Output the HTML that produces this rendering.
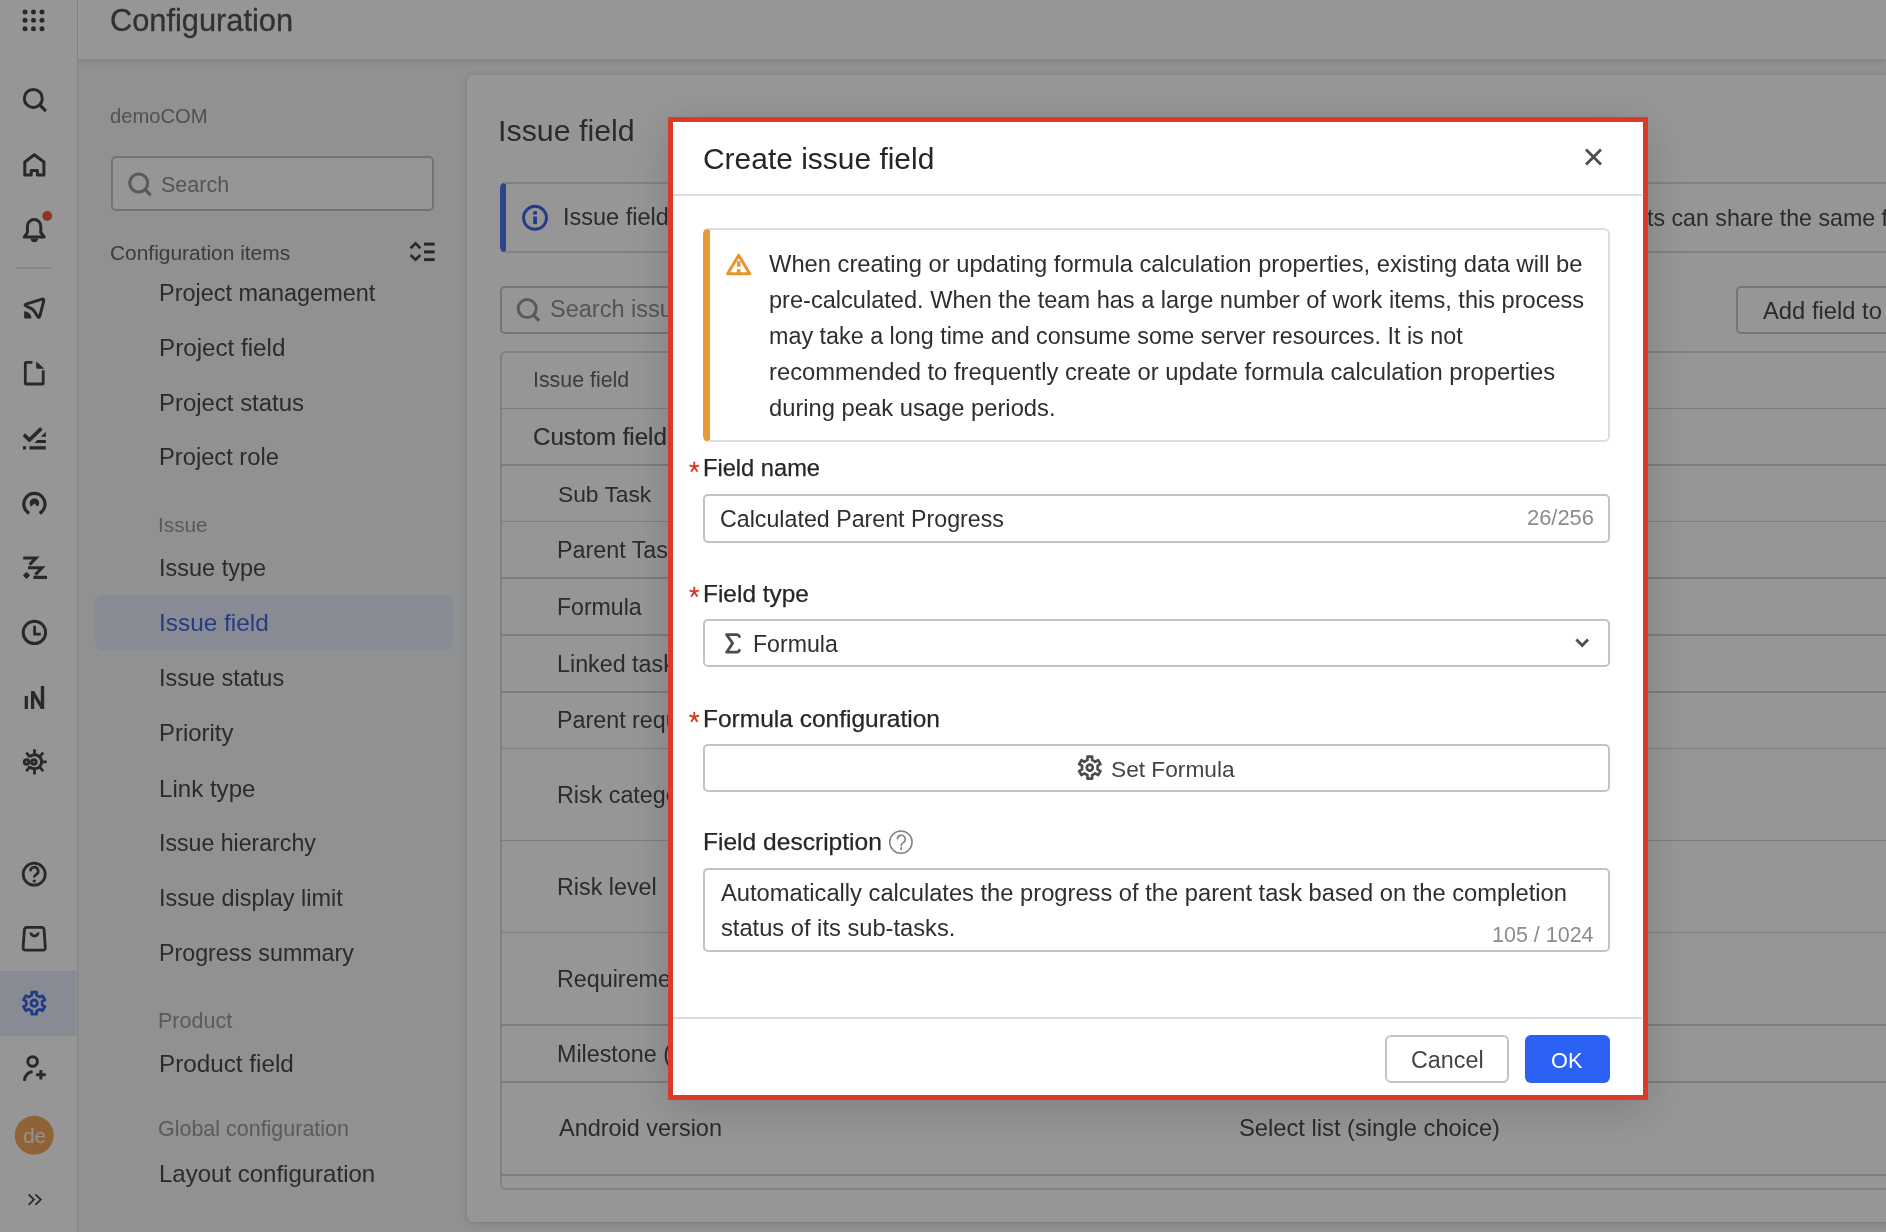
<!DOCTYPE html>
<html><head><meta charset="utf-8"><style>
html,body{margin:0;padding:0;width:1886px;height:1232px;overflow:hidden;background:#fff}
body{position:relative;font-family:"Liberation Sans", sans-serif}
.t{position:absolute;white-space:nowrap;line-height:1;will-change:transform}
svg{position:absolute;overflow:visible}
</style></head><body>
<div style="position:absolute;left:0px;top:0px;width:1886px;height:1232px;background:#f5f6f9"></div>
<div style="position:absolute;left:77px;top:0px;width:1809px;height:59px;background:#fff;box-shadow:0 2px 6px rgba(0,0,0,0.12)"></div>
<div class="t" style="left:110.16px;top:5.85px;font-size:30.78px;color:#545454;font-weight:normal;-webkit-text-stroke:0.3px #545454">Configuration</div>
<div style="position:absolute;left:0px;top:0px;width:78px;height:1232px;background:#fff;border-right:1.5px solid #dcdee3;box-sizing:border-box"></div>
<div class="t" style="left:110.37px;top:106.41px;font-size:20.19px;color:#8a8a8a;font-weight:normal;">demoCOM</div>
<div style="position:absolute;left:111px;top:156px;width:323px;height:55px;border:2px solid #c5c6ca;border-radius:5px;box-sizing:border-box;background:#fff"></div>
<div class="t" style="left:160.93px;top:175.00px;font-size:21.50px;color:#8f8f8f;font-weight:normal;">Search</div>
<div class="t" style="left:110.22px;top:242.69px;font-size:20.92px;color:#666;font-weight:normal;">Configuration items</div>
<div style="position:absolute;left:94.5px;top:595.3px;width:358px;height:55px;background:#e7ecfa;border-radius:8px"></div>
<div class="t" style="left:158.67px;top:282.16px;font-size:23.44px;color:#4a4a4a;font-weight:normal;">Project management</div>
<div class="t" style="left:158.61px;top:335.91px;font-size:24.20px;color:#4a4a4a;font-weight:normal;">Project field</div>
<div class="t" style="left:158.63px;top:390.92px;font-size:23.95px;color:#4a4a4a;font-weight:normal;">Project status</div>
<div class="t" style="left:158.65px;top:446.33px;font-size:23.71px;color:#4a4a4a;font-weight:normal;">Project role</div>
<div class="t" style="left:158.66px;top:557.21px;font-size:23.49px;color:#4a4a4a;font-weight:normal;">Issue type</div>
<div class="t" style="left:158.60px;top:611.28px;font-size:24.36px;color:#3d66e0;font-weight:normal;">Issue field</div>
<div class="t" style="left:158.67px;top:666.84px;font-size:23.46px;color:#4a4a4a;font-weight:normal;">Issue status</div>
<div class="t" style="left:158.63px;top:721.27px;font-size:23.90px;color:#4a4a4a;font-weight:normal;">Priority</div>
<div class="t" style="left:158.62px;top:777.10px;font-size:24.10px;color:#4a4a4a;font-weight:normal;">Link type</div>
<div class="t" style="left:158.69px;top:832.41px;font-size:23.14px;color:#4a4a4a;font-weight:normal;">Issue hierarchy</div>
<div class="t" style="left:158.67px;top:886.84px;font-size:23.46px;color:#4a4a4a;font-weight:normal;">Issue display limit</div>
<div class="t" style="left:158.69px;top:942.35px;font-size:23.22px;color:#4a4a4a;font-weight:normal;">Progress summary</div>
<div class="t" style="left:158.60px;top:1051.66px;font-size:24.26px;color:#4a4a4a;font-weight:normal;">Product field</div>
<div class="t" style="left:158.63px;top:1162.39px;font-size:24.00px;color:#4a4a4a;font-weight:normal;">Layout configuration</div>
<div class="t" style="left:158.28px;top:514.95px;font-size:20.74px;color:#9a9a9a;font-weight:normal;">Issue</div>
<div class="t" style="left:158.22px;top:1009.65px;font-size:21.56px;color:#9a9a9a;font-weight:normal;">Product</div>
<div class="t" style="left:158.22px;top:1119.32px;font-size:21.47px;color:#9a9a9a;font-weight:normal;">Global configuration</div>
<div style="position:absolute;left:467px;top:75px;width:1440px;height:1147px;background:#fff;border-radius:6px;box-shadow:0 1px 6px rgba(0,0,0,0.15)"></div>
<div class="t" style="left:497.93px;top:114.78px;font-size:30.38px;color:#4a4a4a;font-weight:normal;">Issue field</div>
<div style="position:absolute;left:499.8px;top:182px;width:1420px;height:71px;background:#fff;border:2px solid #dcdde1;border-left:6px solid #4a78f0;border-radius:6px;box-sizing:border-box"></div>
<div class="t" style="left:563.26px;top:206.11px;font-size:23.50px;color:#4a4a4a;font-weight:normal;">Issue field</div>
<div class="t" style="left:1646.78px;top:207.26px;font-size:23.20px;color:#4a4a4a;font-weight:normal;">ts can share the same fields</div>
<div style="position:absolute;left:500px;top:286px;width:480px;height:48px;border:2px solid #c5c6ca;border-radius:5px;box-sizing:border-box"></div>
<div class="t" style="left:549.77px;top:297.91px;font-size:23.50px;color:#8f8f8f;font-weight:normal;">Search issues</div>
<div style="position:absolute;left:1735.9px;top:286.3px;width:300px;height:47.3px;border:2px solid #c5c6ca;border-radius:5px;box-sizing:border-box"></div>
<div class="t" style="left:1762.60px;top:299.17px;font-size:23.78px;color:#4a4a4a;font-weight:normal;">Add field to project</div>
<div style="position:absolute;left:500px;top:351px;width:1420px;height:839px;border:2px solid #dcdde1;border-radius:6px;box-sizing:border-box"></div>
<div style="position:absolute;left:500px;top:407.8px;width:1420px;height:1.4px;background:#d3d4d8"></div>
<div style="position:absolute;left:500px;top:464.3px;width:1420px;height:1.4px;background:#d3d4d8"></div>
<div style="position:absolute;left:500px;top:520.8px;width:1420px;height:1.4px;background:#d3d4d8"></div>
<div style="position:absolute;left:500px;top:577.3px;width:1420px;height:1.4px;background:#d3d4d8"></div>
<div style="position:absolute;left:500px;top:634.3px;width:1420px;height:1.4px;background:#d3d4d8"></div>
<div style="position:absolute;left:500px;top:691.3px;width:1420px;height:1.4px;background:#d3d4d8"></div>
<div style="position:absolute;left:500px;top:747.8px;width:1420px;height:1.4px;background:#d3d4d8"></div>
<div style="position:absolute;left:500px;top:839.8px;width:1420px;height:1.4px;background:#d3d4d8"></div>
<div style="position:absolute;left:500px;top:931.8px;width:1420px;height:1.4px;background:#d3d4d8"></div>
<div style="position:absolute;left:500px;top:1024.3px;width:1420px;height:1.4px;background:#d3d4d8"></div>
<div style="position:absolute;left:500px;top:1081.3px;width:1420px;height:1.4px;background:#d3d4d8"></div>
<div style="position:absolute;left:500px;top:1174.3px;width:1420px;height:1.4px;background:#d3d4d8"></div>
<div class="t" style="left:532.73px;top:370.02px;font-size:21.36px;color:#666;font-weight:normal;">Issue field</div>
<div class="t" style="left:533.27px;top:425.41px;font-size:24.08px;color:#4a4a4a;font-weight:normal;-webkit-text-stroke:0.2px #4a4a4a">Custom field</div>
<div class="t" style="left:557.89px;top:483.03px;font-size:22.77px;color:#4a4a4a;font-weight:normal;">Sub Task</div>
<div class="t" style="left:556.78px;top:538.83px;font-size:23.30px;color:#4a4a4a;font-weight:normal;">Parent Task</div>
<div class="t" style="left:556.80px;top:595.76px;font-size:23.08px;color:#4a4a4a;font-weight:normal;">Formula</div>
<div class="t" style="left:556.78px;top:652.58px;font-size:23.30px;color:#4a4a4a;font-weight:normal;">Linked task</div>
<div class="t" style="left:556.78px;top:709.33px;font-size:23.30px;color:#4a4a4a;font-weight:normal;">Parent requirement</div>
<div class="t" style="left:556.78px;top:783.58px;font-size:23.30px;color:#4a4a4a;font-weight:normal;">Risk category</div>
<div class="t" style="left:556.78px;top:875.58px;font-size:23.30px;color:#4a4a4a;font-weight:normal;">Risk level</div>
<div class="t" style="left:556.78px;top:967.83px;font-size:23.30px;color:#4a4a4a;font-weight:normal;">Requirement</div>
<div class="t" style="left:556.78px;top:1042.58px;font-size:23.30px;color:#4a4a4a;font-weight:normal;">Milestone (custom)</div>
<div class="t" style="left:558.60px;top:1117.44px;font-size:23.46px;color:#4a4a4a;font-weight:normal;">Android version</div>
<div class="t" style="left:1239.16px;top:1116.91px;font-size:23.73px;color:#4a4a4a;font-weight:normal;">Select list (single choice)</div>
<svg width="1886" height="1232" style="left:0;top:0" viewBox="0 0 1886 1232"><circle cx="25" cy="11.9" r="2.5" fill="#474747"/><circle cx="25" cy="20.3" r="2.5" fill="#474747"/><circle cx="25" cy="28.8" r="2.5" fill="#474747"/><circle cx="33.5" cy="11.9" r="2.5" fill="#474747"/><circle cx="33.5" cy="20.3" r="2.5" fill="#474747"/><circle cx="33.5" cy="28.8" r="2.5" fill="#474747"/><circle cx="42" cy="11.9" r="2.5" fill="#474747"/><circle cx="42" cy="20.3" r="2.5" fill="#474747"/><circle cx="42" cy="28.8" r="2.5" fill="#474747"/><circle cx="33.3" cy="98.4" r="9" fill="none" stroke="#474747" stroke-width="3"/><path d="M39.8,104.9 L44.8,109.9" stroke="#474747" stroke-width="3.2" stroke-linecap="square"/><path d="M24.8,175.1 V162 L34.3,154.7 L43.9,162 V175.1 H37.4 V170.4 H31.2 V175.1 Z" fill="none" stroke="#474747" stroke-width="3" stroke-linejoin="round"/><path d="M24.2,237 L27.4,232.5 V226.2 A6.7,6.7 0 0 1 40.8,226.2 V232.5 L44.2,237 Z" fill="none" stroke="#474747" stroke-width="3" stroke-linejoin="round"/><path d="M30.6,238.5 A3.7,3.7 0 0 0 38,238.5 Z" fill="#474747"/><circle cx="47.2" cy="216" r="4.9" fill="#f25a45"/><rect x="15" y="267.5" width="37" height="1.2" fill="#d9d9d9"/><path d="M26.66,303.86 L41.34,299.34 Q44.40,298.40 43.60,301.50 L39.85,315.90 Q39.10,318.80 37.50,316.26 L34.69,311.80 Q33.30,309.60 30.97,308.45 L26.47,306.22 Q23.60,304.80 26.66,303.86 Z" fill="none" stroke="#474747" stroke-width="3" stroke-linejoin="round"/><path d="M24.1,311.2 A7.3,7.3 0 0 1 31.4,318.5 H25.3 Q24.1,318.5 24.1,317.3 Z" fill="#474747"/><path d="M32.4,362.3 H26.4 Q25.3,362.3 25.3,363.4 V382.9 Q25.3,384 26.4,384 H42.1 Q43.2,384 43.2,382.9 V370.2" fill="none" stroke="#474747" stroke-width="2.8"/><path d="M36.2,361.2 L44.4,368.8 H37.4 Q36.2,368.8 36.2,367.6 Z" fill="#474747"/><path d="M23.9,434.6 L29.4,440 L41.4,428.4" fill="none" stroke="#474747" stroke-width="3.6"/><path d="M40.8,436.8 L45.8,431.8 V436.8 Z" fill="#474747"/><path d="M37.4,440.1 H45.8 V442.9 H34.6 Z" fill="#474747"/><rect x="29.4" y="446.2" width="16.4" height="3.3" fill="#474747"/><rect x="23" y="446.2" width="3" height="3.3" fill="#474747"/><path d="M29.2,513.3 A10.6,10.6 0 1 1 39.6,513.3" fill="none" stroke="#474747" stroke-width="3.2"/><path d="M31.3,506.6 A4.8,4.8 0 1 1 37.5,506.6 L34.4,503.4 Z" fill="#474747"/><path d="M23.2,558 H36 L29.6,564.6 M28,567.8 H42 L35.4,574.6 M33.4,577.4 H47" fill="none" stroke="#474747" stroke-width="3.1"/><path d="M26.5,572.2 L29.6,575.4 L26.5,578.6 L23.4,575.4 Z" fill="#474747" stroke="#474747" stroke-width="1" stroke-linejoin="round"/><circle cx="34.4" cy="632.4" r="11.2" fill="none" stroke="#474747" stroke-width="3"/><path d="M34.6,625.8 V634.2 H40.8" fill="none" stroke="#474747" stroke-width="2.8"/><rect x="24.7" y="696" width="3.2" height="13" fill="#474747"/><path d="M31,709 V691 H34.2 L40.8,702.6 V686 H44.2 V709 H40.8 L34.2,697.4 V709 Z" fill="#474747"/><path d="M29.6,756.9 A7,7 0 1 1 29.6,766.7" fill="none" stroke="#474747" stroke-width="3"/><circle cx="26.6" cy="762" r="2.3" fill="none" stroke="#474747" stroke-width="2.9"/><circle cx="33.9" cy="762" r="2.3" fill="none" stroke="#474747" stroke-width="2.9"/><path d="M34.5,749.3 V755 M34.5,768.6 V774.6 M41.2,761.8 H46.8 M29.9,757.2 L26.4,752.6 M29.9,766.4 L26.4,771.2 M39.1,757.2 L43.2,752.6 M39.1,766.4 L43.2,771.2" fill="none" stroke="#474747" stroke-width="2.8"/><circle cx="34.2" cy="874.2" r="11" fill="none" stroke="#474747" stroke-width="2.8"/><path d="M30.4,871.2 A3.9,3.9 0 1 1 36,874.6 Q34.2,875.6 34.2,877.4" fill="none" stroke="#474747" stroke-width="2.6"/><circle cx="34.2" cy="881" r="1.6" fill="#474747"/><path d="M27.20,927.30 L41.30,927.30 Q43.90,927.30 44.08,929.89 L45.32,947.51 Q45.50,950.10 42.90,950.10 L25.50,950.10 Q22.90,950.10 23.09,947.51 L24.41,929.89 Q24.60,927.30 27.20,927.30 Z" fill="none" stroke="#474747" stroke-width="2.8" stroke-linejoin="round"/><path d="M30.9,932.4 A3.6,3.6 0 0 0 38.1,932.4" fill="none" stroke="#474747" stroke-width="2.8"/><rect x="0" y="971" width="76" height="65" fill="#e7ecfa"/><path d="M31.75,995.38 L31.76,992.27 L36.64,992.27 L36.65,995.38 L39.75,997.16 L42.44,995.62 L44.89,999.85 L42.20,1001.41 L42.20,1004.99 L44.89,1006.55 L42.44,1010.78 L39.75,1009.24 L36.65,1011.02 L36.64,1014.13 L31.76,1014.13 L31.75,1011.02 L28.65,1009.24 L25.96,1010.78 L23.51,1006.55 L26.20,1004.99 L26.20,1001.41 L23.51,999.85 L25.96,995.62 L28.65,997.16 Z" fill="none" stroke="#3a63e6" stroke-width="2.8" stroke-linejoin="round"/><circle cx="34.2" cy="1003.2" r="3.2" fill="none" stroke="#3a63e6" stroke-width="2.8"/><circle cx="32.6" cy="1061.5" r="4.8" fill="none" stroke="#474747" stroke-width="3"/><path d="M24.4,1080.8 Q25,1072.6 32.6,1071.4" fill="none" stroke="#474747" stroke-width="3"/><path d="M36.1,1074.8 H45.7 M40.9,1070 V1079.6" fill="none" stroke="#474747" stroke-width="3"/><circle cx="34.2" cy="1135.2" r="19.5" fill="#f3a85a"/><text x="34.6" y="1143" text-anchor="middle" font-family="Liberation Sans" font-size="20.5" fill="#fff" fill-opacity="0.9">de</text><path d="M28.6,1194.4 L34,1199.6 L28.6,1204.8 M35.4,1194.4 L40.8,1199.6 L35.4,1204.8" fill="none" stroke="#474747" stroke-width="1.8"/><circle cx="138.7" cy="183" r="9" fill="none" stroke="#999" stroke-width="3"/><path d="M145.2,189.6 L149.6,194.2" stroke="#999" stroke-width="3.2" stroke-linecap="square"/><path d="M410.6,248.2 L415.5,243.4 L420.4,248.2 M410.6,255 L415.5,259.8 L420.4,255" fill="none" stroke="#474747" stroke-width="2.6"/><rect x="424" y="242.6" width="10.6" height="3" fill="#474747"/><rect x="424" y="250.4" width="10.6" height="3" fill="#474747"/><rect x="424" y="258.1" width="10.6" height="3" fill="#474747"/><circle cx="535" cy="217.8" r="11.5" fill="none" stroke="#3a63e6" stroke-width="2.9"/><rect x="533.2" y="211.2" width="3.7" height="3.4" fill="#3a63e6"/><rect x="533.2" y="216.5" width="3.7" height="7.6" fill="#3a63e6"/><circle cx="527.2" cy="308.6" r="9" fill="none" stroke="#999" stroke-width="3"/><path d="M533.7,315.2 L538.1,319.8" stroke="#999" stroke-width="3.2" stroke-linecap="square"/></svg>
<div style="position:absolute;left:0px;top:0px;width:1886px;height:1232px;background:rgba(0,0,0,0.41)"></div>
<div style="position:absolute;left:668px;top:117px;width:980px;height:983px;background:#fff;box-shadow:0 10px 44px rgba(0,0,0,0.16)"></div>
<div class="t" style="left:703.30px;top:143.65px;font-size:29.95px;color:#262626;font-weight:normal;">Create issue field</div>
<div style="position:absolute;left:673px;top:194px;width:969px;height:2px;background:#dcdde1"></div>
<div style="position:absolute;left:703px;top:228px;width:907px;height:214px;border:2px solid #dedee2;border-left:7px solid #e89a35;border-radius:6px;box-sizing:border-box"></div>
<div class="t" style="left:768.80px;top:252.62px;font-size:23.72px;color:#2e2e2e;font-weight:normal;">When creating or updating formula calculation properties, existing data will be</div>
<div class="t" style="left:768.80px;top:288.53px;font-size:23.59px;color:#2e2e2e;font-weight:normal;">pre-calculated. When the team has a large number of work items, this process</div>
<div class="t" style="left:768.80px;top:324.55px;font-size:23.34px;color:#2e2e2e;font-weight:normal;">may take a long time and consume some server resources. It is not</div>
<div class="t" style="left:768.80px;top:359.97px;font-size:23.78px;color:#2e2e2e;font-weight:normal;">recommended to frequently create or update formula calculation properties</div>
<div class="t" style="left:768.80px;top:395.80px;font-size:23.75px;color:#2e2e2e;font-weight:normal;">during peak usage periods.</div>
<svg width="1886" height="1232" style="left:0;top:0" viewBox="0 0 1886 1232"><path d="M694.3,466.95 L694.3,462.55 M694.3,466.95 L690.1999999999999,465.65 M694.3,466.95 L698.4,465.65 M694.3,466.95 L691.5999999999999,471.05 M694.3,466.95 L697.0,471.05" stroke="#d63a25" stroke-width="1.9" stroke-linecap="round" fill="none"/></svg>
<div class="t" style="left:702.65px;top:457.36px;font-size:23.67px;color:#262626;font-weight:normal;-webkit-text-stroke:0.25px #262626">Field name</div>
<div style="position:absolute;left:703.2px;top:494px;width:906.6px;height:48.7px;border:2px solid #c2c3c6;border-radius:5px;box-sizing:border-box"></div>
<div class="t" style="left:719.71px;top:508.14px;font-size:23.23px;color:#2e2e2e;font-weight:normal;">Calculated Parent Progress</div>
<div class="t" style="left:1526.87px;top:507.08px;font-size:21.88px;color:#8c8c8c;font-weight:normal;">26/256</div>
<svg width="1886" height="1232" style="left:0;top:0" viewBox="0 0 1886 1232"><path d="M694.3,591.9499999999999 L694.3,587.55 M694.3,591.9499999999999 L690.1999999999999,590.65 M694.3,591.9499999999999 L698.4,590.65 M694.3,591.9499999999999 L691.5999999999999,596.05 M694.3,591.9499999999999 L697.0,596.05" stroke="#d63a25" stroke-width="1.9" stroke-linecap="round" fill="none"/></svg>
<div class="t" style="left:702.59px;top:581.70px;font-size:24.45px;color:#262626;font-weight:normal;-webkit-text-stroke:0.25px #262626">Field type</div>
<div style="position:absolute;left:703.2px;top:618.8px;width:906.6px;height:48.3px;border:2px solid #c2c3c6;border-radius:5px;box-sizing:border-box"></div>
<div class="t" style="left:752.79px;top:632.74px;font-size:23.11px;color:#2e2e2e;font-weight:normal;">Formula</div>
<svg width="1886" height="1232" style="left:0;top:0" viewBox="0 0 1886 1232"><path d="M694.3,717.05 L694.3,712.65 M694.3,717.05 L690.1999999999999,715.75 M694.3,717.05 L698.4,715.75 M694.3,717.05 L691.5999999999999,721.15 M694.3,717.05 L697.0,721.15" stroke="#d63a25" stroke-width="1.9" stroke-linecap="round" fill="none"/></svg>
<div class="t" style="left:702.58px;top:706.75px;font-size:24.51px;color:#262626;font-weight:normal;-webkit-text-stroke:0.25px #262626">Formula configuration</div>
<div style="position:absolute;left:703.2px;top:743.7px;width:906.6px;height:48.2px;border:2px solid #c2c3c6;border-radius:5px;box-sizing:border-box"></div>
<div class="t" style="left:1111.29px;top:757.79px;font-size:22.69px;color:#444;font-weight:normal;">Set Formula</div>
<div class="t" style="left:702.58px;top:830.40px;font-size:24.57px;color:#262626;font-weight:normal;-webkit-text-stroke:0.25px #262626">Field description</div>
<div style="position:absolute;left:703.2px;top:868.1px;width:906.6px;height:84.4px;border:2px solid #c2c3c6;border-radius:5px;box-sizing:border-box"></div>
<div class="t" style="left:720.60px;top:881.53px;font-size:23.71px;color:#2e2e2e;font-weight:normal;">Automatically calculates the progress of the parent task based on the completion</div>
<div class="t" style="left:720.60px;top:916.94px;font-size:23.70px;color:#2e2e2e;font-weight:normal;">status of its sub-tasks.</div>
<div class="t" style="left:1491.56px;top:924.51px;font-size:21.49px;color:#8c8c8c;font-weight:normal;">105 / 1024</div>
<div style="position:absolute;left:673px;top:1017px;width:969px;height:2px;background:#dcdde1"></div>
<div style="position:absolute;left:1385.4px;top:1035.4px;width:123.3px;height:48px;border:2px solid #c2c3c6;border-radius:6px;box-sizing:border-box"></div>
<div class="t" style="left:1411.41px;top:1049.05px;font-size:23.33px;color:#444;font-weight:normal;">Cancel</div>
<div style="position:absolute;left:1525.4px;top:1035.4px;width:84.3px;height:48px;background:#2b62f3;border-radius:6px"></div>
<div class="t" style="left:1551.48px;top:1050.37px;font-size:21.77px;color:#fff;font-weight:normal;">OK</div>
<div style="position:absolute;left:668px;top:117px;width:980px;height:983px;border:5px solid #da3a28;box-sizing:border-box"></div>
<svg width="1886" height="1232" style="left:0;top:0" viewBox="0 0 1886 1232"><path d="M1586,149.5 L1601,164.5 M1601,149.5 L1586,164.5" stroke="#4a4d50" stroke-width="2.7"/><path d="M738.7,255.2 L749.8,273.8 H727.6 Z" fill="none" stroke="#e8952e" stroke-width="3" stroke-linejoin="round"/><rect x="736.9" y="261.2" width="3.6" height="5.4" fill="#e8952e"/><rect x="736.9" y="269.2" width="3.6" height="4" fill="#e8952e"/><path d="M739.4,636.6 Q738.6,634.6 737,634.6 H726.6 L732.6,643.3 L726.6,652.2 H737 Q738.6,652.2 739.4,650.2" fill="none" stroke="#4a4d50" stroke-width="2.8" stroke-linejoin="round" stroke-linecap="round"/><path d="M1576.4,639.6 L1582.2,645.4 L1588,639.6" fill="none" stroke="#4a4d50" stroke-width="2.8"/><path d="M1087.49,759.94 L1087.47,756.64 L1092.13,756.64 L1092.11,759.94 L1095.28,761.77 L1098.12,760.11 L1100.45,764.14 L1097.59,765.77 L1097.59,769.43 L1100.45,771.06 L1098.12,775.09 L1095.28,773.43 L1092.11,775.26 L1092.13,778.56 L1087.47,778.56 L1087.49,775.26 L1084.32,773.43 L1081.48,775.09 L1079.15,771.06 L1082.01,769.43 L1082.01,765.77 L1079.15,764.14 L1081.48,760.11 L1084.32,761.77 Z" fill="none" stroke="#4a4d50" stroke-width="2.7" stroke-linejoin="round"/><circle cx="1089.8" cy="767.6" r="3" fill="none" stroke="#4a4d50" stroke-width="2.7"/><circle cx="900.9" cy="842.1" r="11.2" fill="none" stroke="#808080" stroke-width="1.5"/><path d="M897.4,839.4 A3.9,3.9 0 1 1 903.2,842.6 Q901.2,843.8 901.2,845.6 V846.2" fill="none" stroke="#808080" stroke-width="1.6"/><rect x="900.3" y="847.2" width="1.8" height="2.8" fill="#808080"/></svg>
</body></html>
